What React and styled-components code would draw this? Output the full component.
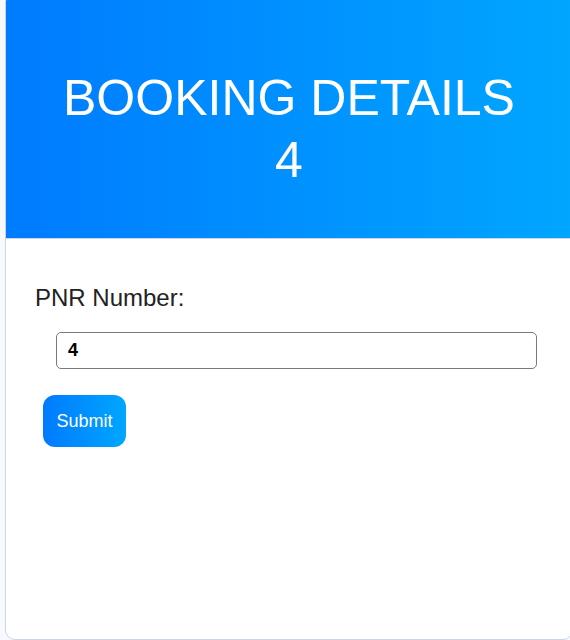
import React, { useState } from 'react';
import styled, { createGlobalStyle } from 'styled-components';

const GlobalStyle = createGlobalStyle`
  html, body {
    margin: 0;
    padding: 0;
    background: #f7f9fd;
    overflow: hidden;
  }
  body {
    font-family: "Liberation Sans", Arial, sans-serif;
  }
`;

const Page = styled.div`
  padding-left: 5px;
  width: 570px;
  box-sizing: border-box;
`;

const Card = styled.div`
  margin-top: -8px;
  width: 568px;
  min-height: 648px;
  box-sizing: border-box;
  background: #ffffff;
  border: 1px solid #c9d4ea;
  border-radius: 10px;
  overflow: hidden;
`;

const Header = styled.div`
  background: linear-gradient(90deg, #007bff 0%, #00a6ff 100%);
  border-bottom: 1px solid #cfd6e2;
  padding: 74px 20px 47px;
`;

const Title = styled.h1`
  margin: 0;
  color: #ffffff;
  font-size: 50px;
  font-weight: 400;
  line-height: 62px;
  text-align: center;
`;

const Form = styled.form`
  display: flex;
  flex-direction: column;
  align-items: flex-start;
  padding: 45px 29px;
`;

const Label = styled.label`
  font-size: 24px;
  color: #222;
  line-height: 27px;
`;

const Input = styled.input`
  margin: 21px 0 0 21px;
  width: 481px;
  height: 37px;
  box-sizing: border-box;
  padding: 0 11px;
  border: 1px solid #7a7a7a;
  border-radius: 5px;
  font-family: "Liberation Sans", Arial, sans-serif;
  font-size: 18px;
  font-weight: 700;
  color: #000;
  outline: none;
`;

const Button = styled.button`
  margin: 26px 0 0 8px;
  width: 83px;
  height: 52px;
  border: none;
  border-radius: 12px;
  background: linear-gradient(90deg, #007bff 0%, #00a6ff 100%);
  color: #ffffff;
  font-family: "Liberation Sans", Arial, sans-serif;
  font-size: 18px;
  cursor: pointer;
`;

export default function App() {
  const [pnr, setPnr] = useState('4');
  return (
    <>
      <GlobalStyle />
      <Page>
        <Card>
          <Header>
            <Title>
              BOOKING DETAILS
              <br />
              {pnr}
            </Title>
          </Header>
          <Form onSubmit={(e) => e.preventDefault()}>
            <Label htmlFor="pnr">PNR Number:</Label>
            <Input id="pnr" value={pnr} onChange={(e) => setPnr(e.target.value)} />
            <Button type="submit">Submit</Button>
          </Form>
        </Card>
      </Page>
    </>
  );
}
